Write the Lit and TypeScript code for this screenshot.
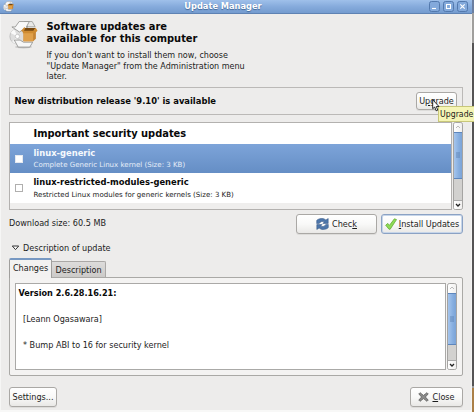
import { LitElement, html, css, svg } from "lit";
import { customElement, property } from "lit/decorators.js";

@customElement("scroll-bar")
class ScrollBar extends LitElement {
  @property({ type: Number }) thumb = 46;

  static styles = css`
    :host { display: flex; flex-direction: column; width: 10px; box-sizing: border-box;
      border: 1px solid #a5a4a2; border-radius: 2.5px; background: #d2d1cf; overflow: hidden; }
    .step { height: 8.5px; flex: none; background: linear-gradient(90deg, #fff, #f1f0ef);
      display: flex; align-items: center; justify-content: center; }
    .thumb { flex: none; box-sizing: border-box; border: solid #5d86bd; border-width: 1px 0;
      background: linear-gradient(90deg, #a6c5ec, #86aee0 60%, #7ba3d6);
      display: flex; align-items: center; justify-content: center; }
    .space { flex: 1; }
    .down { border-top: 1px solid #aaa; height: 8.5px; }
    svg { display: block; }
  `;

  render() {
    return html`
      <div class="step"><svg width="6" height="4" viewBox="0 0 6 4"><path d="M1 3 3 1 5 3" fill="none" stroke="#bbb" stroke-width="1"/></svg></div>
      <div class="thumb" style="height:${this.thumb}px"><svg width="4" height="6" viewBox="0 0 4 6"><path d="M0 1H4M0 3H4M0 5H4" stroke="#587eae" stroke-width=".8"/></svg></div>
      <div class="space"></div>
      <div class="step down"><svg width="6" height="4" viewBox="0 0 6 4"><path d="M1 1 3 3 5 1" fill="none" stroke="#222" stroke-width="1.3"/></svg></div>
    `;
  }
}

const packageIcon = (size: number) => html`
  <svg width=${size} height=${size} viewBox="0 0 30 30">
    <ellipse cx="15" cy="28" rx="9" ry="1.4" fill="#000" opacity=".15"/>
    <circle cx="8.7" cy="17" r="7.8" fill="#dedede" stroke="#b0b0b0" stroke-width=".7"/>
    <path d="M8.7 17 1.8 13.4A7.8 7.8 0 0 1 5.4 9.9Z" fill="#fafafa"/>
    <path d="M8.7 17 3.2 22.5A7.8 7.8 0 0 0 8.7 24.8Z" fill="#f4f4f4"/>
    <circle cx="8.7" cy="17" r="2.2" fill="#fff" stroke="#b0b0b0" stroke-width=".6"/>
    <path d="M16 1.6H24L27 7H19Z" fill="#e9e9e8" stroke="#8b8b88" stroke-width=".7"/>
    <path d="M3 7.2H6.5L10.5 1.6H21L18 7.2H19.5L10.8 12.4Z" fill="#f9f9f9" stroke="#8b8b88" stroke-width=".8"/>
    <path d="M5.5 20.8H11.5L15 23H24.5L21.5 28H9.5Z" fill="#f7f7f7" stroke="#8b8b88" stroke-width=".8"/>
    <path d="M15 10H27.8V19.5L25 22H15Z" fill="#c58434"/>
    <path d="M15 11.5H25V22H15Z" fill="#e0a04a"/>
    <path d="M16 8.2H27.5L25.5 11.5H14.5Z" fill="#754711"/>
    <path d="M12.5 11.2 16 7.3 16.8 8.6 14.9 12.7Z" fill="#cf8b31"/>
    <path d="M14.5 11.2H25.2L27.5 7.8 29.5 11.2 26.8 13.6H14.2Z" fill="#cf8b31"/>
  </svg>`;

const refreshIcon = html`
  <svg class="refresh" width="13" height="12" viewBox="0 0 13 12">
    <g fill="#4d76aa" stroke="#2f5080" stroke-width=".5" stroke-linejoin="round">
      <path d="M.7 5.6V2.4C2 1 4 .5 5.8.5 7.5.5 9 1.1 9.9 2L12.2.5V5.4H6.9L8.4 3.8C7 3 4.4 3.2 3.2 5.6Z"/>
      <path d="M12.3 6.4V9.6C11 11 9 11.5 7.2 11.5 5.5 11.5 4 10.9 3.1 10L.8 11.5V6.6H6.1L4.6 8.2C6 9 8.6 8.8 9.8 6.4Z"/>
    </g>
  </svg>`;

const checkIcon = html`
  <svg class="tick" width="12" height="12" viewBox="0 0 12 12">
    <path d="M.7 7.2 2.8 5.4 4.4 7.4 9.4.8 11.5 1.6 5.2 11.2H4Z" fill="#8fdc55" stroke="#62ab33" stroke-width=".8" stroke-linejoin="round"/>
  </svg>`;

const closeIcon = html`
  <svg class="cross" width="11" height="10" viewBox="0 0 11 10">
    <path d="M2 .7 5.5 3.4 9 .7 10.2 1.9 7.4 5 10.2 8.1 9 9.3 5.5 6.6 2 9.3.8 8.1 3.6 5 .8 1.9Z" fill="#8b8b8a" stroke="#5d5d5c" stroke-width=".8" stroke-linejoin="round"/>
  </svg>`;

@customElement("app-root")
class AppRoot extends LitElement {
  static styles = css`
    :host { display: flex; width: 474px; height: 412px; overflow: hidden; position: relative;
      background: #edeceb; color: #1c1c1c;
      font: 9px/10.5px "DejaVu Sans Condensed", "DejaVu Sans", sans-serif; font-stretch: condensed; }
    * { box-sizing: border-box; }
    svg { display: block; flex: none; }
    .bold { font-family: "DejaVu Sans", sans-serif; font-stretch: normal; font-weight: bold; color: #090909; }
    .win { width: 472px; height: 412px; display: flex; flex-direction: column; white-space: nowrap;
      border-bottom: 2px solid #f8f8f7; }
    .desk { width: 2px; background: linear-gradient(#6b7fa1 0 13px, #a09f9d 13px 43px, #555455 43px 386px, #999 386px 388px, #ab8047 388px); }
    .title { height: 14px; flex: none; display: flex; align-items: center; padding: 0 4px 1px 3px;
      border-bottom: 1px solid #5e82b3; background: linear-gradient(#9fc0ea, #86abdc 50%, #749bcf); }
    .title .name { flex: 1; text-align: center; color: #fff; font-size: 8.25px; text-shadow: 0 .5px 1px #416797; padding-left: 3px; }
    .ctl { display: flex; gap: 3px; }
    .ctl svg { width: 11px; height: 11px; }
    .main { flex: 1; display: flex; flex-direction: column; padding: 6px 8px 0 8px; border-left: 1px solid #f6f6f5; border-right: 1px solid #f3f3f2; }
    .intro { display: flex; height: 67px; }
    .intro .copy { padding: 1px 0 0 8.5px; }
    .h { font-size: 9.9px; line-height: 12px; }
    .lead { margin-top: 5px; font-size: 8.95px; }
    .frame { height: 28px; border: 1px solid #bbb9b7; display: flex; align-items: center; justify-content: space-between; padding: 0 5px 0 4.5px; }
    .frame .bold { font-size: 8.38px; }
    .btn { display: flex; align-items: center; justify-content: center; gap: 3px; height: 20px;
      border: 1px solid #aaa8a5; border-radius: 3px; background: linear-gradient(#fff, #f9f9f8 50%, #e9e8e6); box-shadow: 0 1px 0 #dddcda; }
    .btn.up { width: 41px; height: 18px; }
    .key { text-decoration: underline; text-underline-offset: 1px; text-decoration-thickness: 1px; }
    .updates { display: flex; justify-content: space-between; height: 88px; margin-top: 7px; }
    .list { width: 443px; border: 1px solid #b3b1af; background: #fff; display: flex; flex-direction: column; }
    .list .group { height: 20.5px; padding: 5px 0 0 23.5px; font-size: 9.9px; line-height: 12px; }
    .item { height: 29.7px; display: flex; padding-left: 5px; }
    .item i { width: 8px; height: 8px; margin: 11px 10.5px 0 0; border: 1px solid #b0afae; background: #fff; }
    .item .bold { font-size: 8.4px; padding-top: 4px; }
    .item .sub { font: 7.05px/9px "DejaVu Sans", sans-serif; margin-top: 2px; }
    .item.on { color: #e5edf8; background: linear-gradient(#7da4d9, #658ec5); }
    .item.on .bold { color: #f6f9fd; }
    .item.on i { border-color: #e5e9ef; }
    .list .rest { flex: 1; background: #efeeed; }
    .actions { height: 20px; margin-top: 4px; display: flex; gap: 4px; }
    .actions .size { flex: 1; padding-top: 4px; }
    .actions .btn { width: 81px; }
    .actions .btn.def { width: 82px; border-color: #8ba2c4; box-shadow: inset 0 0 0 1px #c6d5e9; gap: 2px; }
    .expander { display: flex; align-items: center; gap: 3px; height: 12px; margin-top: 8px; padding-left: 2px; }
    .tabs { display: flex; align-items: flex-end; height: 19px; margin-top: 4px; }
    .tab { height: 16px; width: 54px; border: 1px solid #aaa8a6; border-bottom: 0; border-left: 0; border-radius: 0 2px 0 0;
      background: linear-gradient(#dddcdb, #cccac8); display: flex; justify-content: center; align-items: center; padding-top: 1px; }
    .tab.cur { width: 43px; height: 20px; margin-bottom: -1px; border: 1px solid #a09f9d; border-bottom: 0; border-top: 2px solid #7798c2;
      border-radius: 2px 2px 0 0; background: #f3f2f1; padding: 0 0 2px; z-index: 1; position: relative; }
    .panel { height: 99px; border: 1px solid #aaa9a6; border-radius: 0 2px 2px 2px; background: #f4f3f2; padding: 5px 5px 5px 5px;
      display: flex; justify-content: space-between; }
    .text { width: 431px; background: #fff; border: 1px solid #aaa9a7; padding: 3px 0 0 2.5px; line-height: 13px; }
    .text .bold { font-size: 8.15px; }
    .text .log { padding-left: 4.5px; }
    .foot { display: flex; justify-content: space-between; margin-top: 11px; }
    .foot .btn { width: 48px; }
    .foot .btn.close { width: 53px; }
    .tip { position: absolute; left: 438px; top: 106px; width: 40px; height: 16px; background: #f5f5b5; border: 1px solid #c8c779; padding: 2px 0 0 1px; font-size: 8.7px; white-space: nowrap; }
    .cursor { position: absolute; left: 432px; top: 99px; }
  `;

  render() {
    const ctl = (glyph: unknown) => html`<svg viewBox="0 0 11 11"><rect x=".5" y=".5" width="10" height="10" rx="2" fill="#83a9db" stroke="#5379ad"/><g fill="none" stroke="#fff" stroke-width="1.1">${glyph}</g></svg>`;
    return html`
      <div class="win">
        <div class="title">
          ${packageIcon(11)}
          <span class="name bold">Update Manager</span>
          <div class="ctl">
            ${ctl(svg`<path d="M3 7.5H7"/>`)}
            ${ctl(svg`<path d="M3.5 3.5H7.5V7.5H3.5Z"/>`)}
            ${ctl(svg`<path d="M3.3 3.3 7.7 7.7M7.7 3.3 3.3 7.7"/>`)}
          </div>
        </div>
        <div class="main">
          <div class="intro">
            ${packageIcon(29)}
            <div class="copy">
              <div class="h bold">Software updates are<br>available for this computer</div>
              <div class="lead">If you don't want to install them now, choose<br>"Update Manager" from the Administration menu<br>later.</div>
            </div>
          </div>
          <div class="frame">
            <span class="bold">New distribution release '9.10' is available</span>
            <div class="btn up"><span>U<span class="key">p</span>grade</span></div>
          </div>
          <div class="updates">
            <div class="list">
              <div class="group bold">Important security updates</div>
              <div class="item on"><i></i><div><div class="bold">linux-generic</div><div class="sub">Complete Generic Linux kernel (Size: 3 KB)</div></div></div>
              <div class="item"><i></i><div><div class="bold">linux-restricted-modules-generic</div><div class="sub">Restricted Linux modules for generic kernels (Size: 3 KB)</div></div></div>
              <div class="rest"></div>
            </div>
            <scroll-bar .thumb=${47}></scroll-bar>
          </div>
          <div class="actions">
            <span class="size">Download size: 60.5 MB</span>
            <div class="btn">${refreshIcon}<span>Chec<span class="key">k</span></span></div>
            <div class="btn def">${checkIcon}<span><span class="key">I</span>nstall Updates</span></div>
          </div>
          <div class="expander">
            <svg width="9" height="6" viewBox="0 0 9 6"><path d="M1.3 1H7.7L4.5 4.6Z" fill="#fff" stroke="#333" stroke-width="1"/></svg>
            <span>Description of update</span>
          </div>
          <div class="tabs">
            <div class="tab cur">Changes</div>
            <div class="tab">Description</div>
          </div>
          <div class="panel">
            <div class="text">
              <div class="bold">Version 2.6.28.16.21:</div><br>
              <div class="log">[Leann Ogasawara]<br><br>* Bump ABI to 16 for security kernel</div>
            </div>
            <scroll-bar .thumb=${52}></scroll-bar>
          </div>
          <div class="foot">
            <div class="btn">Settings...</div>
            <div class="btn close">${closeIcon}<span><span class="key">C</span>lose</span></div>
          </div>
        </div>
      </div>
      <div class="desk"></div>
      <div class="tip">Upgrade</div>
      <svg class="cursor" width="8" height="13" viewBox="0 0 8 13"><path d="M.7.8V9.7L2.7 8 4.2 11.8 5.8 11.1 4.3 7.5H7Z" fill="#fff" stroke="#111" stroke-width=".9"/></svg>
    `;
  }
}
